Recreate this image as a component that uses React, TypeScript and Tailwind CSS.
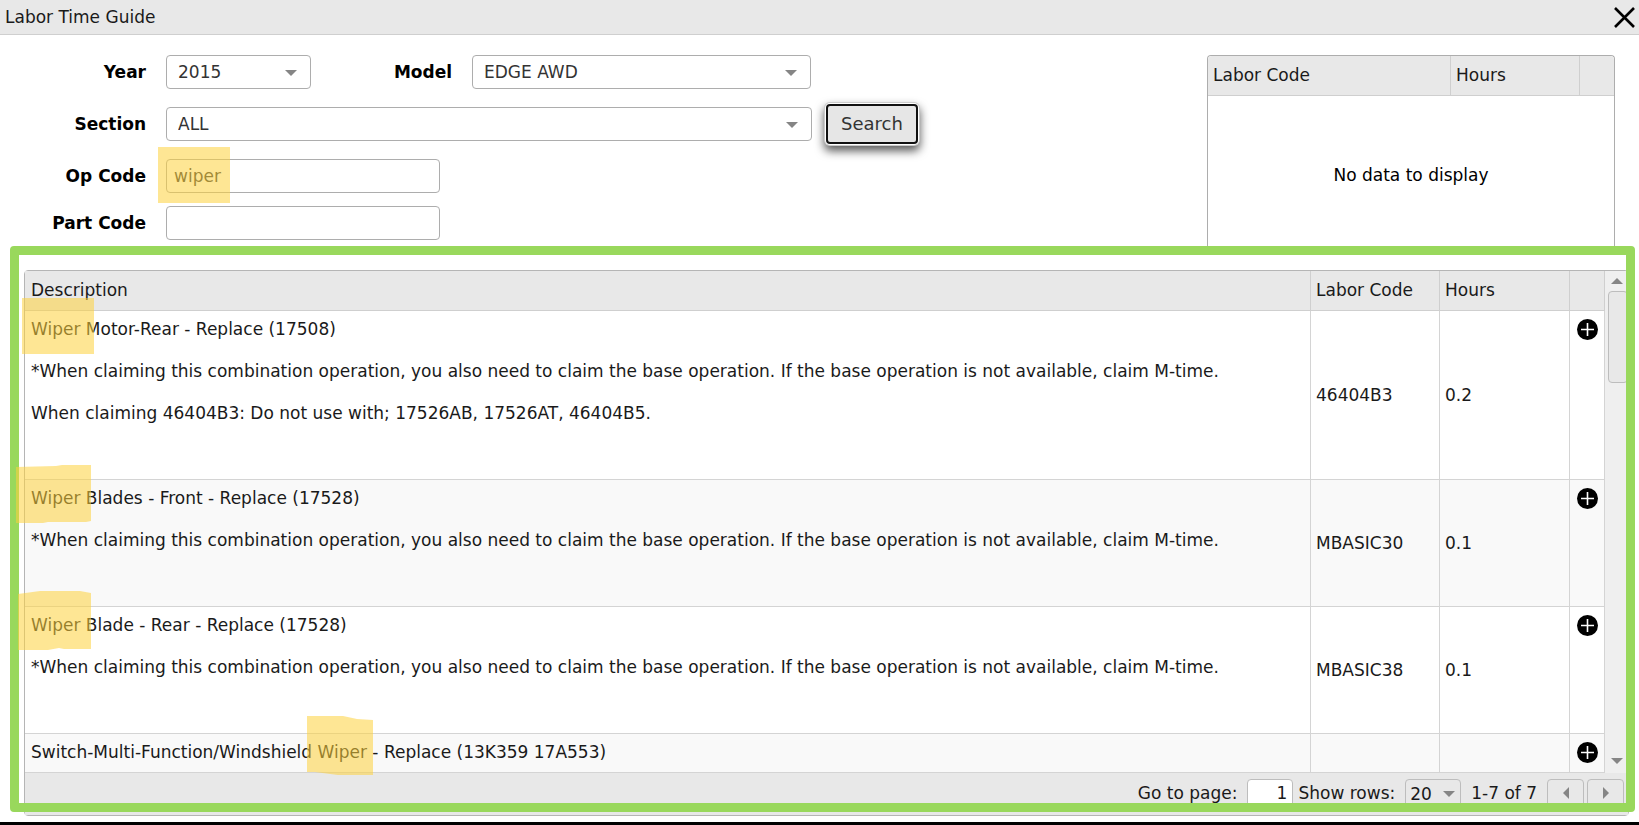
import { useState } from 'react'
import type { ReactNode } from 'react'

const fontStack = "font-[Verdana,'DejaVu_Sans',sans-serif]"

const claimNote =
  '*When claiming this combination operation, you also need to claim the base operation. If the base operation is not available, claim M-time.'

const labelClass = 'w-[146px] shrink-0 text-right font-bold text-black'
const fieldClass = 'h-[34px] w-full rounded border border-[#adadad] bg-white text-[#333]'
const thClass = 'border-b border-r border-[#cfcfcf] px-[5px] text-left font-normal'
const tdClass = 'border-b border-r border-[#d4d4d4]'

type MarkProps = {
  className: string
  width: number
  height: number
  points: string
}

// Highlighter stroke laid over a word
function Mark({ className, width, height, points }: MarkProps) {
  return (
    <svg
      className={`pointer-events-none absolute z-20 max-w-none ${className}`}
      width={width}
      height={height}
      viewBox={`0 0 ${width} ${height}`}
      aria-hidden="true"
    >
      <polygon points={points} fill="#fdd23c" fillOpacity="0.55" />
    </svg>
  )
}

function Triangle({ dir }: { dir: 'up' | 'down' | 'left' | 'right' }) {
  const points = {
    up: '0,9 12,9 6,3',
    down: '0,3 12,3 6,9',
    left: '9,0 9,12 3,6',
    right: '3,0 3,12 9,6',
  }[dir]
  return (
    <svg width="12" height="12" viewBox="0 0 12 12" aria-hidden="true">
      <polygon points={points} fill="#858585" />
    </svg>
  )
}

type SelectProps = {
  id: string
  options: string[]
  className: string
}

function SelectBox({ id, options, className }: SelectProps) {
  return (
    <div className={`relative ${className}`}>
      <select id={id} className={`${fieldClass} appearance-none pl-[11px] pr-8`}>
        {options.map((o) => (
          <option key={o}>{o}</option>
        ))}
      </select>
      <span className="pointer-events-none absolute inset-y-0 right-[14px] flex items-center pt-px">
        <Triangle dir="down" />
      </span>
    </div>
  )
}

type Row = {
  title: ReactNode
  notes: string[]
  code: string
  hours: string
}

const rows: Row[] = [
  {
    title: (
      <>
        <span className="relative inline-block">
          Wiper
          <Mark className="-left-[9px] -top-[21px]" width={72} height={56} points="0,0 72,0 72,56 0,56" />
        </span>{' '}
        Motor-Rear - Replace (17508)
      </>
    ),
    notes: [claimNote, 'When claiming 46404B3: Do not use with; 17526AB, 17526AT, 46404B5.'],
    code: '46404B3',
    hours: '0.2',
  },
  {
    title: (
      <>
        <span className="relative inline-block">
          Wiper
          <Mark
            className="-left-[15px] -top-[23px]"
            width={75}
            height={58}
            points="0,2 40,1 46,0 75,0 75,56 70,57 32,57 27,58 0,58"
          />
        </span>{' '}
        Blades - Front - Replace (17528)
      </>
    ),
    notes: [claimNote],
    code: 'MBASIC30',
    hours: '0.1',
  },
  {
    title: (
      <>
        <span className="relative inline-block">
          Wiper
          <Mark
            className="-left-[13px] -top-[24px]"
            width={73}
            height={59}
            points="0,3 22,0 62,0 73,2 73,58 46,58 41,57 30,59 0,59"
          />
        </span>{' '}
        Blade - Rear - Replace (17528)
      </>
    ),
    notes: [claimNote],
    code: 'MBASIC38',
    hours: '0.1',
  },
  {
    title: (
      <>
        Switch-Multi-Function/Windshield{' '}
        <span className="relative inline-block">
          Wiper
          <Mark
            className="-left-[11px] -top-[26px]"
            width={66}
            height={59}
            points="0,0 36,0 50,3 66,4 66,59 31,59 8,56 0,56"
          />
        </span>{' '}
        - Replace (13K359 17A553)
      </>
    ),
    notes: [],
    code: '',
    hours: '',
  },
]

function SearchForm() {
  const [opCode, setOpCode] = useState('wiper')
  const [partCode, setPartCode] = useState('')

  return (
    <form className="flex flex-col pt-5" onSubmit={(e) => e.preventDefault()}>
      <div className="flex items-center">
        <label htmlFor="year" className={labelClass}>Year</label>
        <SelectBox id="year" options={['2015']} className="ml-5 w-[145px]" />
        <label htmlFor="model" className="w-[141px] text-right font-bold text-black">Model</label>
        <SelectBox id="model" options={['EDGE AWD']} className="ml-5 w-[339px]" />
      </div>
      <div className="mt-[18px] flex h-[34px] items-center">
        <label htmlFor="section" className={labelClass}>Section</label>
        <SelectBox id="section" options={['ALL']} className="ml-5 w-[646px]" />
        <button
          type="submit"
          className="ml-[14px] h-10 w-[92px] rounded border-2 border-[#111] bg-[#e6e6e6] text-lg text-[#333] shadow-[0_0_0_1px_#fff,0_0_0_2px_#ccc,0_5px_10px_2px_rgba(0,0,0,0.65)]"
        >
          Search
        </button>
      </div>
      <div className="mt-[18px] flex items-center">
        <label htmlFor="op-code" className={labelClass}>Op Code</label>
        <div className="relative ml-5 w-[274px]">
          <input
            id="op-code"
            type="text"
            value={opCode}
            onChange={(e) => setOpCode(e.target.value)}
            className={`${fieldClass} px-[7px]`}
          />
          <Mark className="-left-2 -top-3" width={72} height={56} points="0,0 72,0 72,56 0,56" />
        </div>
      </div>
      <div className="mt-[13px] flex items-center">
        <label htmlFor="part-code" className={labelClass}>Part Code</label>
        <div className="ml-5 w-[274px]">
          <input
            id="part-code"
            type="text"
            value={partCode}
            onChange={(e) => setPartCode(e.target.value)}
            className={`${fieldClass} px-[7px]`}
          />
        </div>
      </div>
    </form>
  )
}

function SelectedCodes() {
  return (
    <div className="mr-6 mt-5 flex w-[408px] flex-col rounded-t border border-b-0 border-[#adadad]">
      <table className="w-full table-fixed border-separate border-spacing-0">
        <thead>
          <tr className="h-10 bg-[#e8e8e8]">
            <th className={`${thClass} rounded-tl`}>Labor Code</th>
            <th className={`${thClass} w-[129px]`}>Hours</th>
            <th className="w-[34px] rounded-tr border-b border-[#cfcfcf]" />
          </tr>
        </thead>
      </table>
      <div className="flex flex-1 items-center justify-center pt-2 text-black">No data to display</div>
    </div>
  )
}

function ResultsTable() {
  return (
    <table className="w-full table-fixed border-separate border-spacing-0">
      <thead>
        <tr className="h-10 bg-[#e8e8e8]">
          <th className="border-b border-r border-[#cfcfcf] px-[6px] text-left font-normal">Description</th>
          <th className={`${thClass} w-[129px]`}>Labor Code</th>
          <th className={`${thClass} w-[130px]`}>Hours</th>
          <th className={`${thClass} w-[35px]`} />
        </tr>
      </thead>
      <tbody>
        {rows.map((row, i) => {
          const last = i === rows.length - 1
          return (
            <tr key={i} className={i % 2 ? 'bg-[#f9f9f9]' : 'bg-white'}>
              <td className={`${tdClass} px-[6px] pt-2 ${last ? 'pb-[9px]' : 'pb-[55px]'}`}>
                <div className="flex flex-col gap-[21px]">
                  <p>{row.title}</p>
                  {row.notes.map((note) => (
                    <p key={note}>{note}</p>
                  ))}
                </div>
              </td>
              <td className={`${tdClass} px-[5px]`}>{row.code}</td>
              <td className={`${tdClass} px-[5px]`}>{row.hours}</td>
              <td className={`${tdClass} pt-2 align-top`}>
                <button type="button" aria-label="Add" className="mx-auto block">
                  <svg width="21" height="21" viewBox="0 0 21 21" aria-hidden="true">
                    <circle cx="10.5" cy="10.5" r="10.5" fill="#000" />
                    <path d="M10.5 4v13M4 10.5h13" stroke="#fff" strokeWidth="1.6" />
                  </svg>
                </button>
              </td>
            </tr>
          )
        })}
      </tbody>
    </table>
  )
}

function ScrollTrack() {
  return (
    <div className="flex w-[23px] shrink-0 flex-col items-center rounded-tr bg-[#efefef]">
      <div className="flex h-5 items-center">
        <Triangle dir="up" />
      </div>
      <div className="ml-[3px] h-[92px] w-5 rounded border border-[#bdbdbd] bg-[#e8e8e8]" />
      <div className="mt-auto pb-[6px]">
        <Triangle dir="down" />
      </div>
    </div>
  )
}

function Pager() {
  const [page, setPage] = useState('1')
  const buttonClass = 'flex h-7 w-[37px] items-center justify-center rounded border border-[#bdbdbd]'

  return (
    <div className="flex items-start justify-end bg-[#e8e8e8] pb-[7px] pr-1 pt-[6px] leading-7">
      <label htmlFor="page">Go to page:</label>
      <input
        id="page"
        type="text"
        value={page}
        onChange={(e) => setPage(e.target.value)}
        className="ml-[10px] h-7 w-[46px] rounded border border-[#bdbdbd] bg-white px-[5px] text-right"
      />
      <label htmlFor="rows" className="ml-[5px]">Show rows:</label>
      <div className="relative ml-[10px] w-14">
        <select id="rows" className="h-7 w-full appearance-none rounded border border-[#bdbdbd] bg-[#e8e8e8] pl-1">
          <option>20</option>
        </select>
        <span className="pointer-events-none absolute inset-y-0 right-[6px] flex items-center">
          <Triangle dir="down" />
        </span>
      </div>
      <span className="ml-[10px]">1-7 of 7</span>
      <button type="button" aria-label="Previous page" className={`ml-[10px] ${buttonClass}`}>
        <Triangle dir="left" />
      </button>
      <button type="button" aria-label="Next page" className={`ml-[3px] ${buttonClass}`}>
        <Triangle dir="right" />
      </button>
    </div>
  )
}

export default function App() {
  return (
    <div className={`flex min-h-screen flex-col border-b-[3px] border-black bg-white text-[17px] leading-[21px] text-[#1a1a1a] ${fontStack}`}>
      {/* Title bar */}
      <header className="flex h-[35px] items-center justify-between border-b border-[#cfcfcf] bg-[#e8e8e8] pl-[5px] pr-1 pt-px">
        <h1>Labor Time Guide</h1>
        <button type="button" aria-label="Close">
          <svg width="21" height="21" viewBox="0 0 21 21" aria-hidden="true">
            <path d="M1 1l19 19M20 1L1 20" stroke="#000" strokeWidth="2.6" />
          </svg>
        </button>
      </header>

      {/* Filters */}
      <div className="flex h-[211px] justify-between">
        <SearchForm />
        <SelectedCodes />
      </div>

      {/* Results */}
      <section className="relative flex-1 pb-[6px] pl-6 pr-[10px] pt-6">
        <div className="rounded border border-[#b5b5b5]">
          <div className="flex">
            <div className="min-w-0 flex-1">
              <ResultsTable />
            </div>
            <ScrollTrack />
          </div>
          <Pager />
        </div>
        <div className="pointer-events-none absolute bottom-[10px] left-[10px] right-1 top-0 z-10 rounded border-[9px] border-[#99d85c]" />
      </section>
    </div>
  )
}
